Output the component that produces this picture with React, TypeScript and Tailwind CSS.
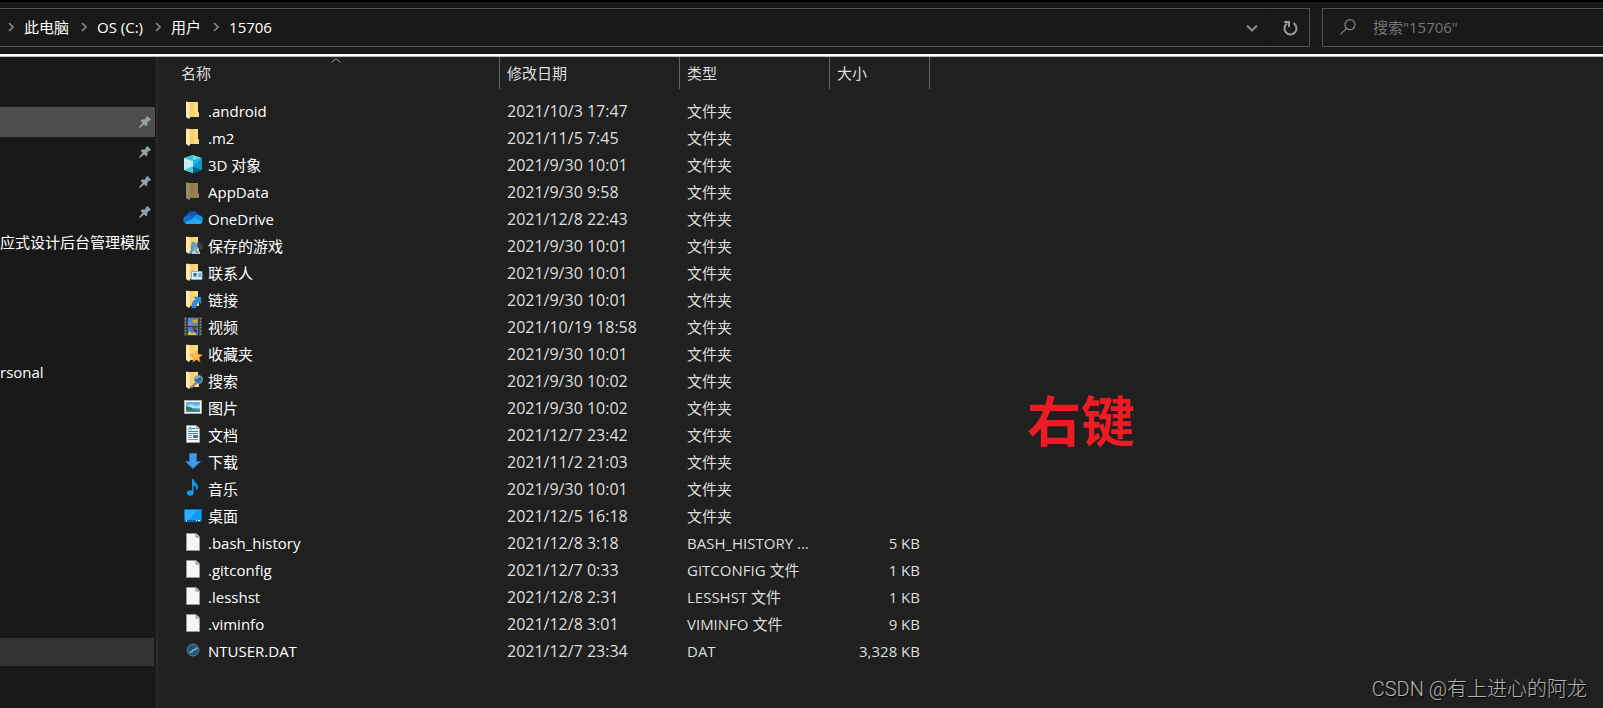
import type { ReactNode } from 'react';

type IconKind =
  | 'folder' | 'hidden' | 'cube' | 'onedrive' | 'games' | 'contacts' | 'links' | 'video'
  | 'favorites' | 'searches' | 'pictures' | 'documents' | 'downloads' | 'music' | 'desktop' | 'file' | 'dat';

type Entry = { name: string; icon: IconKind; date: string; type: string; size?: string };

const entries: Entry[] = [
  { name: '.android', icon: 'folder', date: '2021/10/3 17:47', type: '文件夹' },
  { name: '.m2', icon: 'folder', date: '2021/11/5 7:45', type: '文件夹' },
  { name: '3D 对象', icon: 'cube', date: '2021/9/30 10:01', type: '文件夹' },
  { name: 'AppData', icon: 'hidden', date: '2021/9/30 9:58', type: '文件夹' },
  { name: 'OneDrive', icon: 'onedrive', date: '2021/12/8 22:43', type: '文件夹' },
  { name: '保存的游戏', icon: 'games', date: '2021/9/30 10:01', type: '文件夹' },
  { name: '联系人', icon: 'contacts', date: '2021/9/30 10:01', type: '文件夹' },
  { name: '链接', icon: 'links', date: '2021/9/30 10:01', type: '文件夹' },
  { name: '视频', icon: 'video', date: '2021/10/19 18:58', type: '文件夹' },
  { name: '收藏夹', icon: 'favorites', date: '2021/9/30 10:01', type: '文件夹' },
  { name: '搜索', icon: 'searches', date: '2021/9/30 10:02', type: '文件夹' },
  { name: '图片', icon: 'pictures', date: '2021/9/30 10:02', type: '文件夹' },
  { name: '文档', icon: 'documents', date: '2021/12/7 23:42', type: '文件夹' },
  { name: '下载', icon: 'downloads', date: '2021/11/2 21:03', type: '文件夹' },
  { name: '音乐', icon: 'music', date: '2021/9/30 10:01', type: '文件夹' },
  { name: '桌面', icon: 'desktop', date: '2021/12/5 16:18', type: '文件夹' },
  { name: '.bash_history', icon: 'file', date: '2021/12/8 3:18', type: 'BASH_HISTORY ...', size: '5 KB' },
  { name: '.gitconfig', icon: 'file', date: '2021/12/7 0:33', type: 'GITCONFIG 文件', size: '1 KB' },
  { name: '.lesshst', icon: 'file', date: '2021/12/8 2:31', type: 'LESSHST 文件', size: '1 KB' },
  { name: '.viminfo', icon: 'file', date: '2021/12/8 3:01', type: 'VIMINFO 文件', size: '9 KB' },
  { name: 'NTUSER.DAT', icon: 'dat', date: '2021/12/7 23:34', type: 'DAT', size: '3,328 KB' },
];

const crumbs = ['此电脑', 'OS (C:)', '用户', '15706'];

const folder = (
  <>
    <path d="M5 1h10v10l1 1v4H5z" fill="#f6d16f" />
    <path d="M11 1h4v10l1 1v4h-5z" fill="#fadb83" />
    <path d="M3 1h2.5L7 3.5V17l-1 1-3-2z" fill="#ffeaab" />
    <path d="M3 1h3l1 2.5V16" fill="none" stroke="#f3d47e" strokeWidth=".6" />
  </>
);

const glyphs: Record<IconKind, ReactNode> = {
  folder,
  hidden: <g opacity=".52">{folder}</g>,
  cube: (
    <>
      <path d="M10 0l9 3-9 3-9-3z" fill="#5fdbe4" />
      <path d="M10 0L1 3l9 3z" fill="#40c3d2" />
      <path d="M1 3l9 3v12l-9-3z" fill="#bff1ef" />
      <path d="M10 11L1 15l9 3z" fill="#44cfdc" />
      <path d="M19 3l-9 3v12l9-3z" fill="#0a96cf" />
      <path d="M19 3l-9 3v6z" fill="#23b5dd" />
      <path d="M10 12l9 3-9 3z" fill="#046488" />
    </>
  ),
  onedrive: (
    <>
      <path d="M3.6 7.5A6.3 6.3 0 0 1 15.6 6l-3 5H5z" fill="#0a5bb8" />
      <path d="M4.5 6.5c2-.3 3.6.3 5 1.3l4 3-9 4.2A4.2 4.2 0 0 1 4.5 6.5z" fill="#1070cf" />
      <path d="M10 8.2l2-1.6A5 5 0 0 1 16 6a4.6 4.6 0 0 1 3.5 6.5l-6-1z" fill="#1490df" />
      <path d="M1.5 13.5L11.5 9l8 3.5a3.2 3.2 0 0 1-3.5 2.5H4.5a4 4 0 0 1-3-1.5z" fill="#28a8ea" />
    </>
  ),
  games: (
    <>
      {folder}
      <path d="M13 7c3-2 6 0 6 2l1 2-1 3-3-1-2-2z" fill="#3a3f44" />
      <path d="M9 6a2 2 0 0 1 3 2v2l1 1v5l-3 2-4-1 2-3V9z" fill="#5f9cc0" />
      <path d="M12 5a2.5 2.5 0 0 1 2 4l1 5 2 2v2H9v-2l2-2 1-5z" fill="#b5ccd9" />
      <path d="M13 7v8l2 2" stroke="#668294" strokeWidth="1.2" fill="none" />
    </>
  ),
  contacts: (
    <>
      {folder}
      <path d="M8.5 8.5h10.5v8H8.5z" fill="#d9effb" stroke="#77b2d9" />
      <path d="M10 10h4v4h-4z" fill="#7bb7d5" />
      <circle cx="12" cy="11.5" r="1.2" fill="#334e61" />
      <path d="M15 11h3M15 13h3" stroke="#246e9e" />
    </>
  ),
  links: (
    <>
      {folder}
      <path d="M11 7h7v7l-2-2c-2 1-3 3-3 6H9c-1-4 1-7 4-9z" fill="#2d8ce0" stroke="#1c6bb5" strokeWidth=".5" />
    </>
  ),
  video: (
    <>
      <path d="M1 0h18v19H1z" fill="#3c3c3c" />
      <path d="M2.5 1v17M17.5 1v17" stroke="#8e8e8e" strokeWidth="1.5" strokeDasharray="1.5 1.5" />
      <path d="M5 1h10v8H5z" fill="#4a87e2" />
      <path d="M5 10h10v8H5z" fill="#427cd8" />
      <circle cx="12" cy="4" r="2.5" fill="#dfac22" />
      <path d="M10 5l4 2-1 1h-4z" fill="#66a33a" />
      <path d="M5 6h3l1 2H5z" fill="#d96aa1" />
      <path d="M10 2l2-1 1 2z" fill="#c93424" />
      <path d="M9 10h5l-2 3h-2z" fill="#913528" />
      <path d="M11 13h3v2h-3z" fill="#273450" />
      <path d="M5 16l2-2 2 2 2-1 2 2v1H5z" fill="#e7bd34" />
    </>
  ),
  favorites: (
    <>
      {folder}
      <path d="M13.5 6.5l1.6 3.8 4.2.4-3.2 2.8 1 4.5-3.6-2.4-3.7 2.4 1-4.3-3.3-3 4.3-.4z" fill="#ffb33b" stroke="#e1912b" strokeWidth=".6" />
      <path d="M13.5 8v5l-4-1.5 3-.5z" fill="#ffd37c" />
    </>
  ),
  searches: (
    <>
      {folder}
      <path d="M13 12l-4.5 4.5" stroke="#77818b" strokeWidth="2" strokeLinecap="round" />
      <circle cx="15.5" cy="8.5" r="4" fill="#356a9d" stroke="#93a5b3" />
      <path d="M13 8a3 3 0 0 1 4-2" stroke="#9fcaea" strokeWidth="1.3" fill="none" />
    </>
  ),
  pictures: (
    <>
      <path d="M1 2h18v14H1z" fill="#a8abad" />
      <path d="M2 3h16v12H2z" fill="#fff" />
      <path d="M3 4h14v10H3z" fill="#62aee6" />
      <path d="M3 8l5-2 5 2 4-1v3H3z" fill="#b8dcf0" />
      <path d="M3 8l4 1 4 2 6 1v1H3z" fill="#3d7659" />
      <path d="M3 12h14v2H3z" fill="#417d9b" />
    </>
  ),
  documents: (
    <>
      <path d="M3.5.5h10l3 3v14h-13z" fill="#f8f8f8" stroke="#a0a0a0" />
      <path d="M13.5.5v3h3" fill="#d8d8d8" stroke="#8a8a8a" />
      <path d="M5.5 5l2-3 1 3M9 3.5h3" fill="none" stroke="#2081bd" />
      <path d="M5 6.5h10M5 8.5h10" stroke="#2388c5" />
      <path d="M5 10.5h4M5 12.5h4M5 14.5h10" stroke="#8d9195" />
      <path d="M10 10h5v3h-5z" fill="#3b7a91" />
    </>
  ),
  downloads: <path d="M6.5 1.5h7v8h4L10 16.5l-7.5-7h4z" fill="#3e9be9" stroke="#2776bb" />,
  music: (
    <>
      <path d="M9 0h1.5c.5 3.5 4.5 4.5 4.5 8 0 2-1 3-2 4 1-3-.5-5-2.5-5.5V14H9z" fill="#0a9bf5" />
      <ellipse cx="7.3" cy="14" rx="3.3" ry="2.7" fill="#0a9bf5" />
    </>
  ),
  desktop: (
    <>
      <path d="M1.5 3.5h17v12h-17z" fill="#0b9cf7" stroke="#0a75c0" />
      <path d="M2 4h12L6 14H2z" fill="#2facff" />
      <path d="M2 14.5h16" stroke="#07548f" />
      <path d="M3 14.5h1M13 14.5h1M15 14.5h2" stroke="#fff" />
    </>
  ),
  file: (
    <>
      <path d="M3.5.5h9.5l3.5 3.5v13.5h-13z" fill="#f5f6f7" stroke="#999" />
      <path d="M13 .5V4h3.5" fill="#dcdcdc" stroke="#808080" />
    </>
  ),
  dat: (
    <>
      <circle cx="10" cy="9" r="6" fill="#105a86" stroke="#6f7779" />
      <path d="M6.5 11.5l3-1 .5-1.5 3-1 1-1.5" stroke="#9ba8ad" strokeWidth="1.5" fill="none" />
    </>
  ),
};

function FileIcon({ kind }: { kind: IconKind }) {
  return (
    <svg viewBox="0 0 20 20" className="mt-px h-5 w-5 shrink-0" aria-hidden="true">
      {glyphs[kind]}
    </svg>
  );
}

function Pin() {
  return (
    <svg viewBox="0 0 12 12" className="h-3 w-3" fill="#94a0a8" stroke="#94a0a8" strokeWidth=".7" aria-hidden="true">
      <path d="M8.3.3L11.7 3.7l-1 .9-.8-.1-2 2.2c.4 1.400.1 2.700-.7 3.500L5.200 8 .8 11.700.3 11.200 4 6.800 1.800 4.800c.9-.9 2.200-1.200 3.500-.8l2.200-2-.1-.9z" />
    </svg>
  );
}

function Header({ children, sorted }: { children: string; sorted?: boolean }) {
  return (
    <th scope="col" className="relative h-8 border-r border-[#636363] p-0 text-left font-normal text-[#dedede]">
      {sorted && (
        <svg viewBox="0 0 10 5" className="absolute top-px left-1/2 h-[5px] w-[10px] -translate-x-1/2" aria-hidden="true">
          <path d="M.5 4.5L5 .5l4.5 4" fill="none" stroke="#9d9d9d" />
        </svg>
      )}
      <button className={sorted ? 'h-8 w-full px-2 text-left' : 'h-8 w-full px-[7px] text-left'}>{children}</button>
    </th>
  );
}

export default function App() {
  return (
    <div className="relative flex min-h-screen flex-col overflow-hidden border-t-2 border-black bg-[#191919] font-['Open_Sans','Noto_Sans_CJK_SC',sans-serif] text-[15px] leading-5 text-white">
      {/* Address bar */}
      <header className="flex gap-3 border-b-2 border-white pt-[6px] pb-[7px]">
        <div className="flex h-[39px] flex-1 border border-l-0 border-[#535353]">
          <nav className="flex flex-1 items-center pb-[2px] pl-2">
            {crumbs.map((crumb) => (
              <span key={crumb} className="flex items-center">
                <svg viewBox="0 0 6 10" className="h-[10px] w-[6px]" aria-hidden="true">
                  <path d="M1 1l4 4-4 4" fill="none" stroke="#878787" strokeWidth="1.6" />
                </svg>
                <a href="#" className="pr-3 pl-[10px] whitespace-nowrap">{crumb}</a>
              </span>
            ))}
          </nav>
          <button aria-label="以前的位置" className="flex w-[38px] items-center justify-center border-r border-[#141414]">
            <svg viewBox="0 0 12 8" className="h-2 w-3">
              <path d="M1 1.5l5 5 5-5" fill="none" stroke="#8c8c8c" strokeWidth="2" />
            </svg>
          </button>
          <button aria-label="刷新" className="flex w-[38px] items-center justify-center">
            <svg viewBox="0 0 16 16" className="h-4 w-4" fill="none" stroke="#999" strokeWidth="2">
              <path d="M11.5 3.2A6 6 0 1 1 5 3.5" />
              <path d="M2 2h5v5" />
            </svg>
          </button>
        </div>
        <div className="flex h-[39px] w-[281px] items-center gap-[17px] border border-r-0 border-[#535353] pb-[2px] pl-[17px]">
          <svg viewBox="0 0 16 16" className="h-4 w-4 shrink-0" fill="none" stroke="#858585" strokeWidth="1.2" aria-hidden="true">
            <circle cx="10" cy="5.7" r="5" />
            <path d="M6.4 9.3L.5 15.3" />
          </svg>
          <input
            type="text"
            aria-label="搜索"
            placeholder='搜索"15706"'
            className="w-full min-w-0 bg-transparent outline-none placeholder:text-[#757575]"
          />
        </div>
      </header>

      <div className="flex flex-1 border-t border-[#b9bdb9]">
        {/* Navigation pane */}
        <aside className="w-[158px] shrink-0 overflow-hidden border-r-2 border-[#292929] pt-[50px]">
          {[0, 1, 2, 3].map((i) => (
            <div key={i} className={i === 0 ? 'mr-px flex h-[30px] items-center justify-end bg-[#4d4d4d] pr-1' : 'mr-px flex h-[30px] items-center justify-end pr-1'}>
              <button aria-label="取消固定"><Pin /></button>
            </div>
          ))}
          <a href="#" className="flex h-[30px] items-center whitespace-nowrap">应式设计后台管理模版</a>
          <a href="#" className="mt-[100px] flex h-[30px] items-center">rsonal</a>
          <div className="mt-[251px] mr-[2px] h-7 bg-[#333]" />
        </aside>

        {/* File list */}
        <main className="flex-1 bg-[#202020] pl-[15px]">
          <table className="w-[757px] table-fixed border-separate border-spacing-0">
            <colgroup>
              <col className="w-[327px]" />
              <col className="w-[180px]" />
              <col className="w-[150px]" />
              <col className="w-[100px]" />
            </colgroup>
            <thead>
              <tr>
                <Header sorted>名称</Header>
                <Header>修改日期</Header>
                <Header>类型</Header>
                <Header>大小</Header>
              </tr>
            </thead>
            <tbody className="text-[#dedede] before:block before:h-2">
              {entries.map((entry) => (
                <tr key={entry.name} className="h-[27px] whitespace-nowrap">
                  <td className="p-0 text-white">
                    <div className="flex items-center gap-[5px] pl-[10px]">
                      <FileIcon kind={entry.icon} />
                      {entry.name}
                    </div>
                  </td>
                  <td className="p-0 pl-[7px] text-base leading-5">{entry.date}</td>
                  <td className="p-0 pl-[7px]">{entry.type}</td>
                  <td className="p-0 pr-[10px] text-right">{entry.size}</td>
                </tr>
              ))}
            </tbody>
          </table>
        </main>
      </div>

      <p className="absolute top-[379px] right-[468px] text-[54px] leading-[80px] font-bold text-[#ed1c24]">右键</p>
      <p className="absolute right-4 bottom-[5px] font-['Roboto','Noto_Sans_CJK_SC',sans-serif] text-xl leading-7 font-light text-[#b4b4b4] [text-shadow:1px_1px_1px_#000]">
        CSDN @有上进心的阿龙
      </p>
    </div>
  );
}
